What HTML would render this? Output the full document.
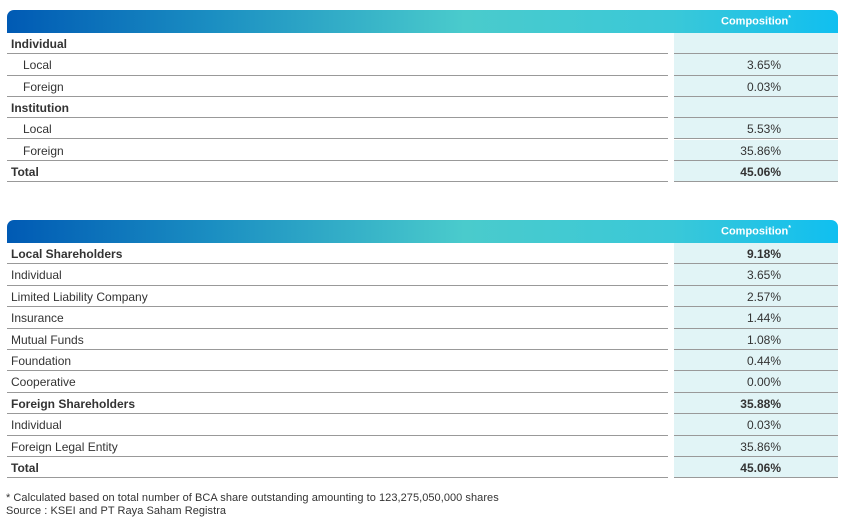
<!DOCTYPE html><html><head><style>
body{margin:0;width:845px;height:523px;background:#fff;font-family:"Liberation Sans",Arial,sans-serif;color:#333;position:relative;overflow:hidden}
.hd{position:absolute;left:7px;width:831px;height:23px;border-radius:7px 7px 0 0;background:linear-gradient(90deg,#005ab4 0%,#1b8fc2 25%,#4acbcc 55%,#3ac8d8 80%,#10bff0 100%)}
.hd span{position:absolute;left:660px;width:178px;text-align:center;top:5px;color:#fff;font-weight:bold;font-size:11px}
.hd sup{font-size:7px}
.r{position:absolute;left:7px;width:831px;font-size:12px}
.l{position:absolute;left:0;width:661px;height:100%;border-bottom:1.5px solid #999;box-sizing:border-box}
.v{position:absolute;left:667px;width:164px;height:100%;background:#e1f4f6;border-bottom:1.5px solid #999;box-sizing:border-box;text-align:right;padding-right:57px}
.t{position:absolute;top:4px;left:4px;white-space:nowrap}
.i{left:16px}
.b{font-weight:bold}
.v .t{position:static;padding-top:4px;display:block}
.f{position:absolute;left:6px;font-size:11px;color:#333;letter-spacing:0.05px}
</style></head><body>
<div class="hd" style="top:10px"><span>Composition<sup>*</sup></span></div>
<div class="r" style="top:33px;height:21.3px"><div class="l"><span class="t b">Individual</span></div><div class="v"></div></div>
<div class="r" style="top:54.3px;height:21.3px"><div class="l"><span class="t i">Local</span></div><div class="v"><span class="t">3.65%</span></div></div>
<div class="r" style="top:75.6px;height:21.3px"><div class="l"><span class="t i">Foreign</span></div><div class="v"><span class="t">0.03%</span></div></div>
<div class="r" style="top:96.9px;height:21.3px"><div class="l"><span class="t b">Institution</span></div><div class="v"></div></div>
<div class="r" style="top:118.2px;height:21.3px"><div class="l"><span class="t i">Local</span></div><div class="v"><span class="t">5.53%</span></div></div>
<div class="r" style="top:139.5px;height:21.3px"><div class="l"><span class="t i">Foreign</span></div><div class="v"><span class="t">35.86%</span></div></div>
<div class="r" style="top:160.8px;height:21.3px"><div class="l"><span class="t b">Total</span></div><div class="v"><span class="t b">45.06%</span></div></div>

<div class="hd" style="top:220px"><span>Composition<sup>*</sup></span></div>
<div class="r" style="top:243px;height:21.4px"><div class="l"><span class="t b">Local Shareholders</span></div><div class="v"><span class="t b">9.18%</span></div></div>
<div class="r" style="top:264.4px;height:21.4px"><div class="l"><span class="t">Individual</span></div><div class="v"><span class="t">3.65%</span></div></div>
<div class="r" style="top:285.8px;height:21.4px"><div class="l"><span class="t">Limited Liability Company</span></div><div class="v"><span class="t">2.57%</span></div></div>
<div class="r" style="top:307.2px;height:21.4px"><div class="l"><span class="t">Insurance</span></div><div class="v"><span class="t">1.44%</span></div></div>
<div class="r" style="top:328.6px;height:21.4px"><div class="l"><span class="t">Mutual Funds</span></div><div class="v"><span class="t">1.08%</span></div></div>
<div class="r" style="top:350px;height:21.4px"><div class="l"><span class="t">Foundation</span></div><div class="v"><span class="t">0.44%</span></div></div>
<div class="r" style="top:371.4px;height:21.4px"><div class="l"><span class="t">Cooperative</span></div><div class="v"><span class="t">0.00%</span></div></div>
<div class="r" style="top:392.8px;height:21.4px"><div class="l"><span class="t b">Foreign Shareholders</span></div><div class="v"><span class="t b">35.88%</span></div></div>
<div class="r" style="top:414.2px;height:21.4px"><div class="l"><span class="t">Individual</span></div><div class="v"><span class="t">0.03%</span></div></div>
<div class="r" style="top:435.6px;height:21.4px"><div class="l"><span class="t">Foreign Legal Entity</span></div><div class="v"><span class="t">35.86%</span></div></div>
<div class="r" style="top:457px;height:21.4px"><div class="l"><span class="t b">Total</span></div><div class="v"><span class="t b">45.06%</span></div></div>

<div class="f" style="top:492px">* Calculated based on total number of BCA share outstanding amounting to 123,275,050,000 shares</div>
<div class="f" style="top:505px">Source : KSEI and PT Raya Saham Registra</div>
</body></html>
